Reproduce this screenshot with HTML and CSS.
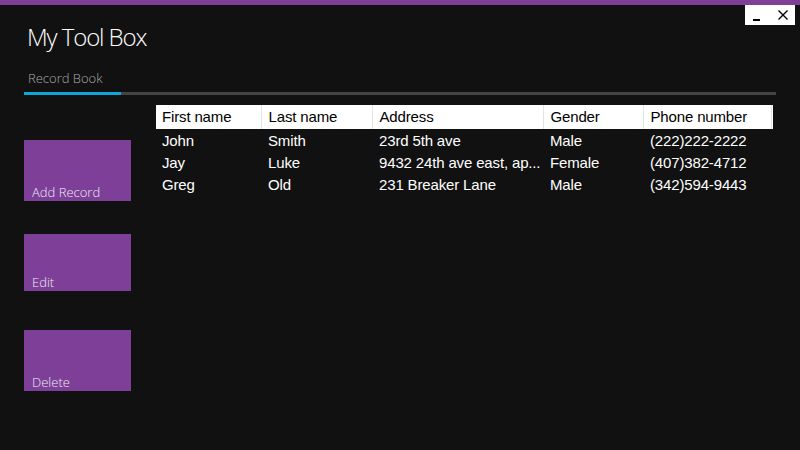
FILE: index.html
```html
<!DOCTYPE html>
<html lang="en">
<head>
    <meta charset="UTF-8">
    <meta name="viewport" content="width=device-width, initial-scale=1.0">
    <title>My Tool Box</title>
    <link rel="stylesheet" href="styles.css">
</head>
<body>
    <div class="accent"></div>

    <div class="window-controls">
        <button class="win-btn" title="Minimize">
            <svg width="9" height="9" viewBox="0 0 9 9"><rect x="0" y="7" width="7" height="2" fill="#000"/></svg>
        </button>
        <button class="win-btn" title="Close">
            <svg width="10" height="10" viewBox="0 0 10 10"><path d="M0.5 0.5 L9.5 9.5 M9.5 0.5 L0.5 9.5" stroke="#000" stroke-width="1.4"/></svg>
        </button>
    </div>

    <div class="app">
        <h1 class="app-title">My Tool Box</h1>

        <div class="tabs">
            <div class="tab active">Record Book</div>
        </div>
        <div class="tab-track">
            <div class="tab-indicator"></div>
        </div>

        <div class="content">
            <div class="actions">
                <button class="tile tile-add">Add Record</button>
                <button class="tile tile-edit">Edit</button>
                <button class="tile tile-delete">Delete</button>
            </div>

            <table class="records">
                <colgroup>
                    <col class="col-first">
                    <col class="col-last">
                    <col class="col-address">
                    <col class="col-gender">
                    <col class="col-phone">
                    <col class="col-fill">
                </colgroup>
                <thead>
                    <tr>
                        <th>First name</th>
                        <th>Last name</th>
                        <th>Address</th>
                        <th>Gender</th>
                        <th>Phone number</th>
                        <th></th>
                    </tr>
                </thead>
                <tbody id="recordsBody"></tbody>
            </table>
        </div>
    </div>

    <script>
        const records = [
            { first: 'John', last: 'Smith', address: '23rd 5th ave', gender: 'Male', phone: '(222)222-2222' },
            { first: 'Jay', last: 'Luke', address: '9432 24th ave east, apt 12', gender: 'Female', phone: '(407)382-4712' },
            { first: 'Greg', last: 'Old', address: '231 Breaker Lane', gender: 'Male', phone: '(342)594-9443' }
        ];

        // Trim long cell text with a plain "..." so it fits its column
        function fitText(cell, text) {
            cell.textContent = text;
            if (cell.scrollWidth <= cell.clientWidth) return;
            let cut = text.length;
            while (cut > 0) {
                cut--;
                cell.textContent = text.slice(0, cut).trimEnd() + '...';
                if (cell.scrollWidth <= cell.clientWidth) break;
            }
        }

        const body = document.getElementById('recordsBody');
        records.forEach(r => {
            const row = document.createElement('tr');
            for (let i = 0; i < 6; i++) {
                row.appendChild(document.createElement('td'));
            }
            body.appendChild(row);
            const cells = row.children;
            fitText(cells[0], r.first);
            fitText(cells[1], r.last);
            fitText(cells[2], r.address);
            fitText(cells[3], r.gender);
            fitText(cells[4], r.phone);
        });
    </script>
</body>
</html>
```

FILE: styles.css
```css
body {
    margin: 0;
    background: #111111;
    font-family: 'Open Sans', 'Noto Sans', sans-serif;
    color: #fff;
    overflow: hidden;
}

.accent {
    height: 5px;
    background: #7e3f98;
}

/* Window chrome */
.window-controls {
    position: absolute;
    top: 5px;
    right: 5px;
    width: 50px;
    height: 20px;
    background: #fff;
    display: flex;
}

.win-btn {
    flex: 1;
    border: none;
    background: none;
    padding: 0;
    display: flex;
    align-items: center;
    justify-content: center;
}

.win-btn:first-child {
    padding-top: 3px;
}

.app {
    padding: 0 24px;
}

.app-title {
    margin: 16px 0 0 0;
    padding-left: 3px;
    font-size: 24px;
    line-height: 32px;
    font-weight: 300;
    color: #fff;
    letter-spacing: -1.1px;
}

.tabs {
    display: flex;
    margin-top: 15px;
    padding-left: 4px;
}

.tab {
    font-size: 13px;
    line-height: 20px;
    font-weight: 300;
    color: #a8a8a8;
    padding-bottom: 4px;
}

.tab-track {
    height: 3px;
    background: #444;
}

.tab-indicator {
    width: 97px;
    height: 100%;
    background: #0ca6d8;
}

.content {
    display: flex;
    align-items: flex-start;
    gap: 25px;
    margin-top: 10px;
}

.actions {
    width: 107px;
    display: flex;
    flex-direction: column;
    padding-top: 35px;
}

.tile {
    border: none;
    background: #7e3f98;
    color: #ecebf4;
    font-family: 'Open Sans', 'Noto Sans', sans-serif;
    font-size: 13px;
    font-weight: 300;
    line-height: 16px;
    text-align: left;
    padding: 0 8px 1px;
    display: flex;
    align-items: flex-end;
    cursor: pointer;
}

.tile-add {
    height: 61px;
}

.tile-edit {
    height: 57px;
    margin-top: 33px;
}

.tile-delete {
    height: 61px;
    margin-top: 39px;
}

/* Records grid */
.records {
    width: 617px;
    border-collapse: collapse;
    table-layout: fixed;
    font-family: 'Liberation Sans', Arial, sans-serif;
    font-size: 15px;
    letter-spacing: -0.15px;
}

.col-first { width: 105px; }
.col-last { width: 111px; }
.col-address { width: 171px; }
.col-gender { width: 100px; }
.col-phone { width: 128px; }
.col-fill { width: 2px; }

.records th {
    background: #fff;
    color: #000;
    font-weight: normal;
    text-align: left;
    height: 24px;
    line-height: 24px;
    padding: 0 0 0 7px;
    border-right: 1px solid #e3e3e3;
}

.records th:first-child,
.records td:first-child {
    padding-left: 6px;
}

.records th:last-child {
    padding: 0;
    border-right: none;
}

.records td {
    height: 21px;
    line-height: 21px;
    padding: 1px 0 0 7px;
    color: #fff;
    white-space: nowrap;
    overflow: hidden;
}

.records td:last-child {
    padding: 0;
}
```
